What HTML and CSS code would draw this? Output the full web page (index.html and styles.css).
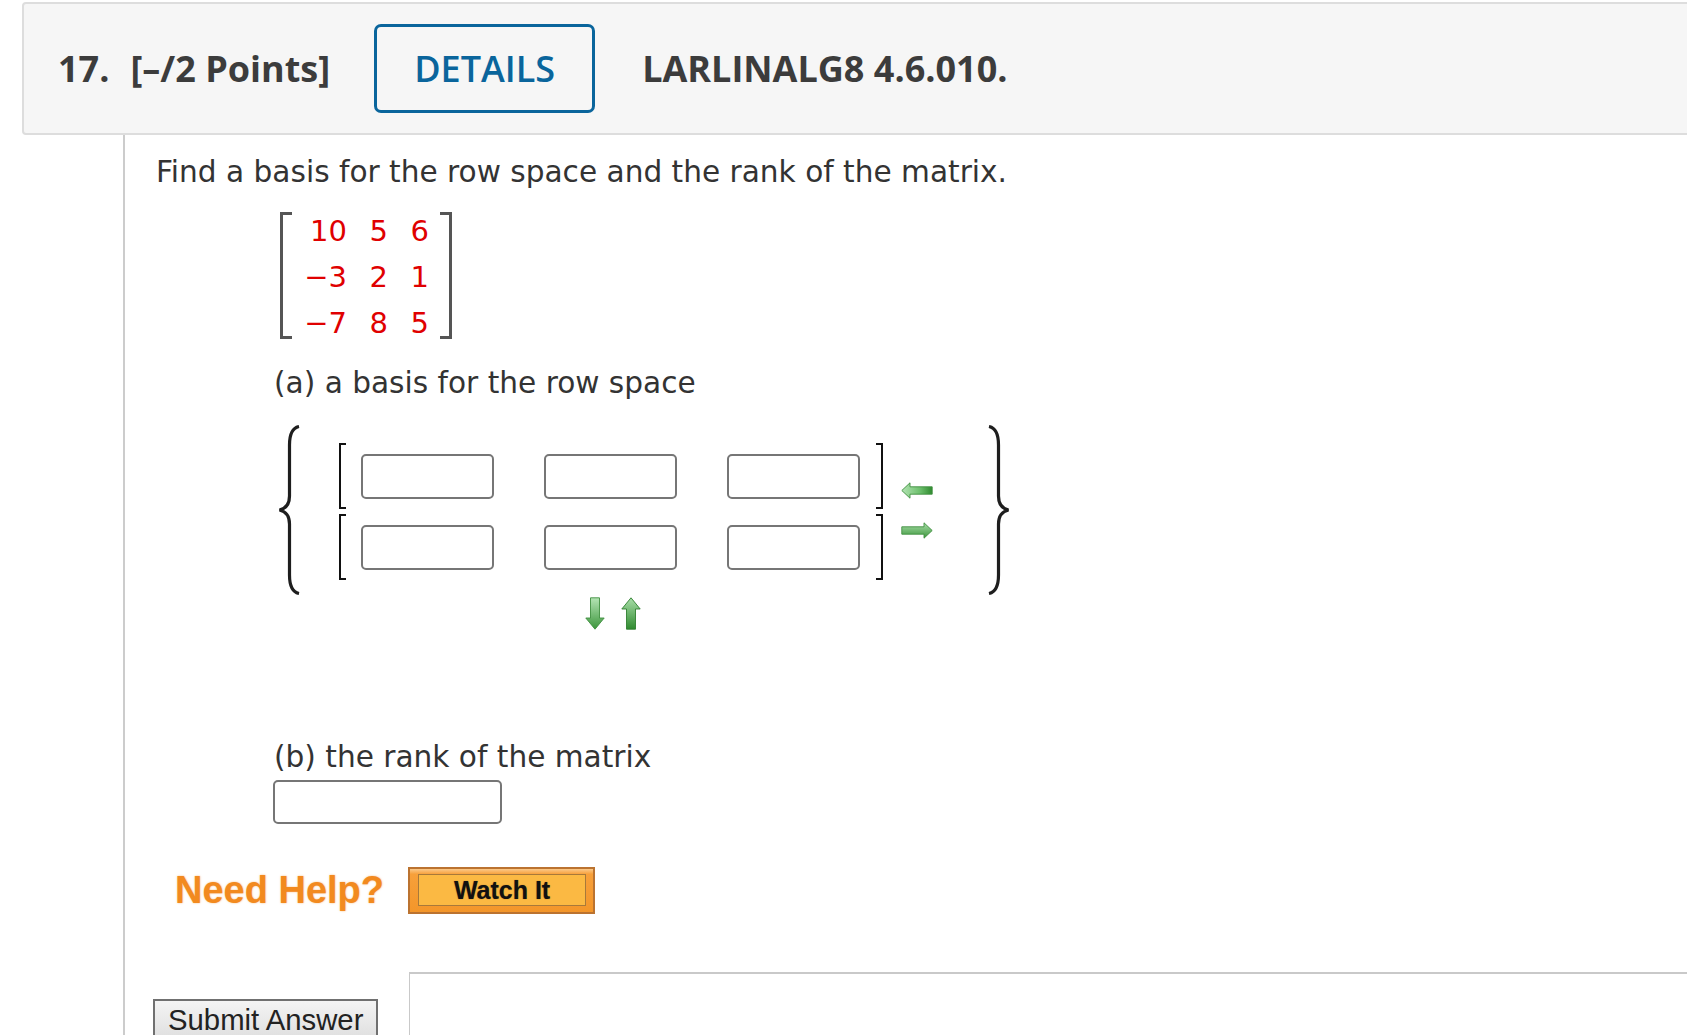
FILE: index.html
```html
<!DOCTYPE html>
<html>
<head>
<meta charset="utf-8">
<link rel="stylesheet" href="styles.css">
</head>
<body>
<div class="page">
  <div class="header">
    <span class="num">17.</span>
    <span class="points">[–/2 Points]</span>
    <span class="details">DETAILS</span>
    <span class="title">LARLINALG8 4.6.010.</span>
  </div>
  <div class="content">
    <p class="question">Find a basis for the row space and the rank of the matrix.</p>
    <div class="matrix">
      <div class="mb l"></div>
      <div class="mgrid">
        <span>10</span><span>5</span><span>6</span>
        <span>−3</span><span>2</span><span>1</span>
        <span>−7</span><span>8</span><span>5</span>
      </div>
      <div class="mb r"></div>
    </div>
    <div class="part">
      <p class="label">(a) a basis for the row space</p>
      <div class="basis">
        <svg class="brace" width="22" height="170" viewBox="0 0 22 170">
          <path d="M21 1.5 C14 3 11.5 9 11.5 20 L11.5 71 C11.5 79.5 8 83.5 1.5 85 C8 86.5 11.5 90.5 11.5 99 L11.5 150 C11.5 161 14 167 21 168.5" fill="none" stroke="#1e1e1e" stroke-width="3.2"/>
        </svg>
        <div class="vectors">
          <div class="vec">
            <div class="sb l"></div>
            <div class="box"></div><div class="box"></div><div class="box"></div>
            <div class="sb r"></div>
          </div>
          <div class="vec">
            <div class="sb l"></div>
            <div class="box"></div><div class="box"></div><div class="box"></div>
            <div class="sb r"></div>
          </div>
        </div>
        <div class="harrows">
          <svg width="32" height="17" viewBox="0 0 32 17">
            <defs>
              <linearGradient id="gla" x1="0" y1="0" x2="1" y2="0">
                <stop offset="0" stop-color="#b4e4b4"/>
                <stop offset="0.6" stop-color="#6cbf6c"/>
                <stop offset="1" stop-color="#2f8a2f"/>
              </linearGradient>
            </defs>
            <path d="M0.8 8.5 L9 0.8 L9 4.8 L31.2 4.8 L31.2 12.2 L9 12.2 L9 16.2 Z" fill="url(#gla)" stroke="#3f8f3f" stroke-width="0.9" stroke-linejoin="round"/>
          </svg>
          <svg width="32" height="17" viewBox="0 0 32 17">
            <defs>
              <linearGradient id="gra" x1="0" y1="0" x2="0" y2="1">
                <stop offset="0" stop-color="#a8dea8"/>
                <stop offset="1" stop-color="#3c963c"/>
              </linearGradient>
            </defs>
            <path d="M0.8 4.8 L23 4.8 L23 0.8 L31.2 8.5 L23 16.2 L23 12.2 L0.8 12.2 Z" fill="url(#gra)" stroke="#3f8f3f" stroke-width="0.9" stroke-linejoin="round"/>
          </svg>
        </div>
        <svg class="brace rb" width="22" height="170" viewBox="0 0 22 170">
          <path d="M1 1.5 C8 3 10.5 9 10.5 20 L10.5 71 C10.5 79.5 14 83.5 20.5 85 C14 86.5 10.5 90.5 10.5 99 L10.5 150 C10.5 161 8 167 1 168.5" fill="none" stroke="#1e1e1e" stroke-width="3.2"/>
        </svg>
      </div>
      <div class="updown">
        <svg width="20" height="33" viewBox="0 0 20 33">
          <defs>
            <linearGradient id="gda" x1="0" y1="0" x2="0" y2="1">
              <stop offset="0" stop-color="#b4e4b4"/>
              <stop offset="1" stop-color="#3c963c"/>
            </linearGradient>
          </defs>
          <path d="M5.5 0.8 L14.5 0.8 L14.5 21 L19.2 21 L10 32.2 L0.8 21 L5.5 21 Z" fill="url(#gda)" stroke="#3f8f3f" stroke-width="0.9" stroke-linejoin="round"/>
        </svg>
        <svg width="20" height="33" viewBox="0 0 20 33">
          <defs>
            <linearGradient id="gua" x1="0" y1="0" x2="0" y2="1">
              <stop offset="0" stop-color="#a8dea8"/>
              <stop offset="1" stop-color="#2f8a2f"/>
            </linearGradient>
          </defs>
          <path d="M10 0.8 L19.2 12 L14.5 12 L14.5 32.2 L5.5 32.2 L5.5 12 L0.8 12 Z" fill="url(#gua)" stroke="#2f7f2f" stroke-width="0.9" stroke-linejoin="round"/>
        </svg>
      </div>
    </div>
    <div class="part">
      <p class="label lb-b">(b) the rank of the matrix</p>
      <div class="rank-input"></div>
    </div>
    <div class="help">
      <span class="need">Need Help?</span>
      <span class="watch"><span class="watch-inner">Watch It</span></span>
    </div>
    <div class="bottom">
      <span class="submit">Submit Answer</span>
      <div class="panel"></div>
    </div>
  </div>
</div>
</body>
</html>
```

FILE: styles.css
```css
body {
  margin: 0;
  background: #ffffff;
  font-family: "DejaVu Sans", Verdana, sans-serif;
  color: #333333;
}

.page {
  width: 1687px;
  height: 1035px;
  overflow: hidden;
}

.header {
  box-sizing: border-box;
  height: 133px;
  margin: 2px -12px 0 22px;
  border: 2px solid #dddddd;
  border-radius: 4px;
  background: #f6f6f6;
  display: flex;
  align-items: center;
  padding-left: 34px;
  font-family: "Open Sans", sans-serif;
  font-weight: 700;
  font-size: 36px;
  color: #3c3c3c;
  white-space: nowrap;
}

.points {
  margin-left: 21px;
}

.details {
  box-sizing: border-box;
  margin-left: 44px;
  width: 221px;
  height: 89px;
  border: 3px solid #0a659c;
  border-radius: 7px;
  color: #0a659c;
  font-weight: 600;
  display: flex;
  align-items: center;
  justify-content: center;
}

.title {
  margin-left: 47px;
}

.content {
  margin-left: 123px;
  border-left: 2px solid #cccccc;
  padding: 20px 0 0 31px;
  font-size: 29.6px;
  line-height: 34px;
  height: 900px;
}

.question {
  margin: 0;
}

.matrix {
  display: flex;
  margin: 19px 0 0 124px;
}

.mb {
  box-sizing: border-box;
  width: 12px;
  border: 3px solid #555555;
  margin: 4px 0 7px;
}

.mb.l {
  border-right: none;
}

.mb.r {
  border-left: none;
}

.mgrid {
  display: grid;
  grid-template-columns: 42px 41px 41px;
  justify-items: end;
  margin: 0 11px 0 13px;
  color: #e00000;
  font-size: 29px;
  line-height: 46px;
}

.part {
  margin-left: 118px;
}

.label {
  margin: 20px 0 0;
}

.basis {
  display: flex;
  align-items: center;
  margin: 25px 0 0 4px;
}

.brace {
  display: block;
}

.vectors {
  margin: 3px 0 0 39px;
  display: flex;
  flex-direction: column;
  gap: 5px;
}

.vec {
  display: flex;
  align-items: center;
  height: 66px;
}

.sb {
  box-sizing: border-box;
  width: 7px;
  height: 66px;
  border: 2px solid #111111;
}

.sb.l {
  border-right: none;
  margin-right: 15px;
}

.sb.r {
  border-left: none;
  margin-left: 16px;
}

.box {
  box-sizing: border-box;
  width: 133px;
  height: 45px;
  border: 2px solid #767676;
  border-radius: 5px;
  background: #ffffff;
}

.box + .box {
  margin-left: 50px;
}

.harrows {
  display: flex;
  flex-direction: column;
  gap: 23px;
  margin: 0 0 0 18px;
}

.harrows svg {
  display: block;
}

.rb {
  margin-left: 55px;
}

.updown {
  display: flex;
  gap: 16px;
  margin: 2px 0 0 311px;
}

.updown svg {
  display: block;
}

.lb-b {
  margin-top: 110px;
}

.rank-input {
  box-sizing: border-box;
  width: 229px;
  height: 44px;
  margin: 6px 0 0 -1px;
  border: 2px solid #767676;
  border-radius: 5px;
}

.help {
  display: flex;
  align-items: center;
  margin: 43px 0 0 19px;
}

.need {
  font-family: "Liberation Sans", Arial, sans-serif;
  font-weight: 700;
  font-size: 38px;
  line-height: 47px;
  color: #f28a1f;
  text-shadow: 0 0 2px rgba(242, 138, 31, 0.6);
}

.watch {
  box-sizing: border-box;
  display: flex;
  width: 187px;
  height: 47px;
  margin-left: 24px;
  padding: 5px 7px 6px 8px;
  border: 2px solid #bb7330;
  background: linear-gradient(#fbc98a 0, #f7a03a 12%, #f3962a 100%);
}

.watch-inner {
  box-sizing: border-box;
  flex: 1;
  display: flex;
  align-items: center;
  justify-content: center;
  border: 1.5px solid #a8793a;
  background: #fbb943;
  font-family: "Liberation Sans", Arial, sans-serif;
  font-weight: 700;
  font-size: 25px;
  color: #111111;
  text-shadow: 0 0 1px rgba(0, 0, 0, 0.5);
}

.bottom {
  display: flex;
  align-items: flex-start;
  margin-top: 58px;
}

.submit {
  box-sizing: border-box;
  width: 225px;
  height: 46px;
  margin: 27px 0 0 -3px;
  padding-left: 13px;
  border: 2px solid #707070;
  background: linear-gradient(#f4f4f4, #dddddd);
  font-family: "Liberation Sans", Arial, sans-serif;
  font-size: 29.3px;
  line-height: 38px;
  color: #222222;
  white-space: nowrap;
}

.panel {
  flex: 1;
  height: 200px;
  margin-left: 31px;
  margin-right: -20px;
  border-top: 2px solid #c9c9c9;
  border-left: 1px solid #c9c9c9;
}
```
